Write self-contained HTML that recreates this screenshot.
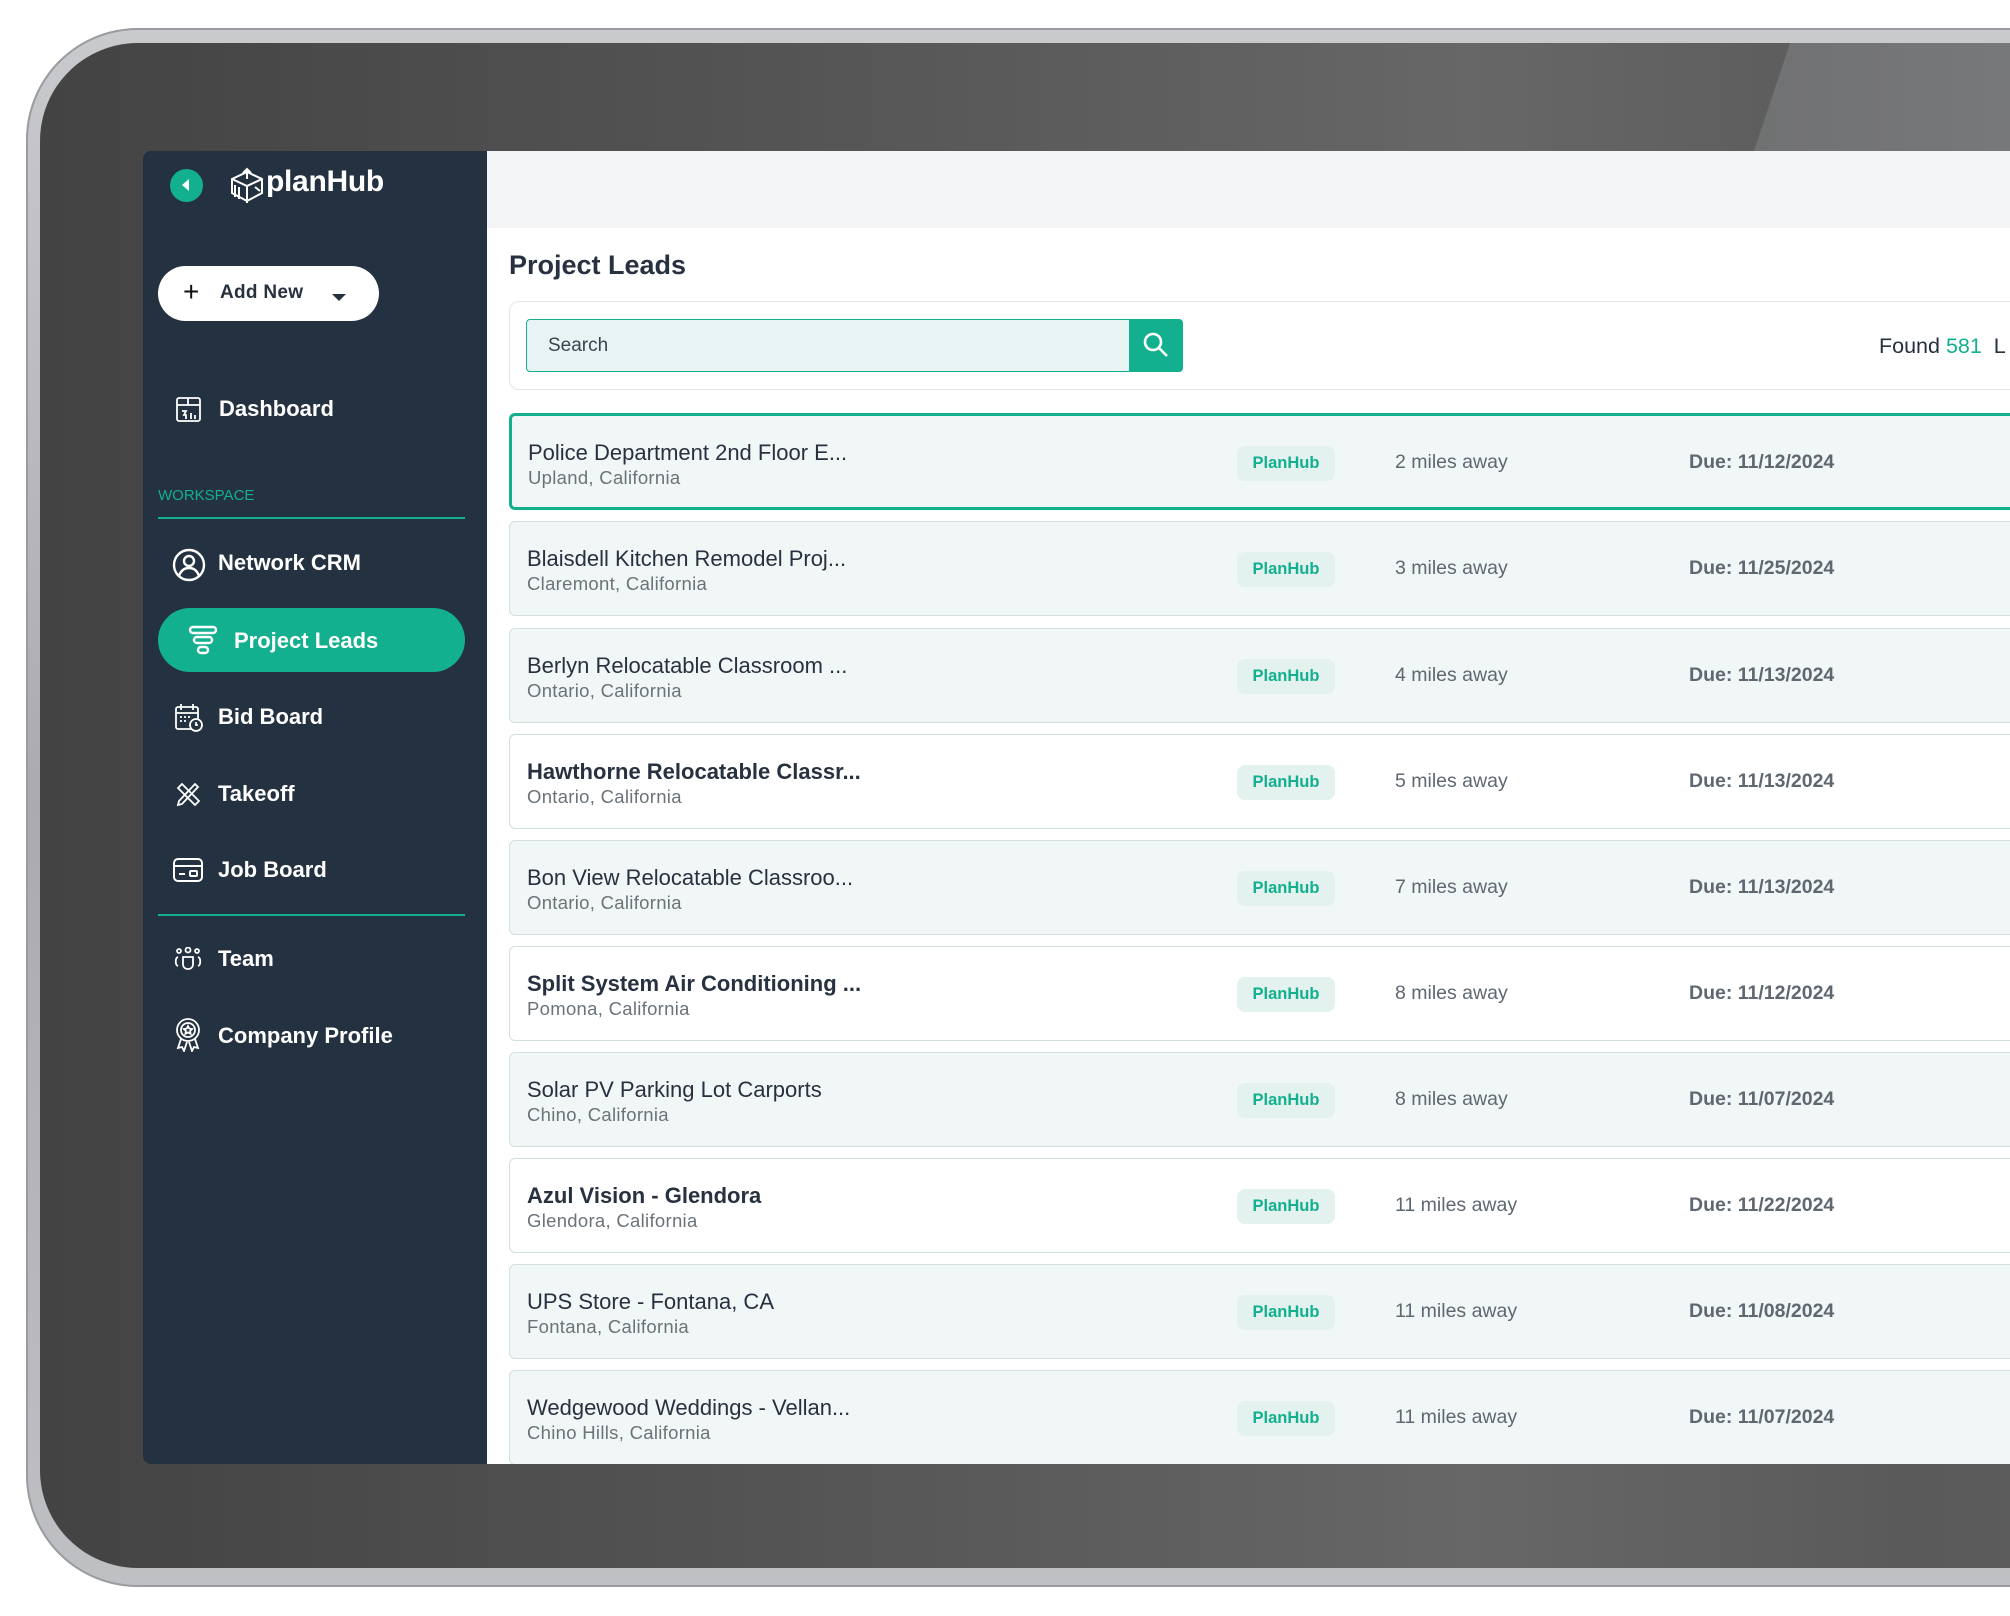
<!DOCTYPE html>
<html><head><meta charset="utf-8"><style>
*{margin:0;padding:0;box-sizing:border-box}
body{width:2010px;height:1616px;background:#fff;position:relative;overflow:hidden;font-family:"Liberation Sans",sans-serif}
.rim{position:absolute;left:26px;top:28px;width:2200px;height:1559px;border-radius:112px;background:linear-gradient(180deg,#c9cacd,#a9abaf 50%,#bfc0c3);box-shadow:inset 0 0 0 2px #9a9ca0}
.bezel{position:absolute;left:40px;top:43px;width:2200px;height:1525px;border-radius:98px;background:linear-gradient(90deg,#434343 0%,#555 35%,#676767 65%,#5a5a5a 85%,#5f5f5f 100%);overflow:hidden}
.glare{position:absolute;left:1710px;top:0;width:400px;height:120px;background:linear-gradient(90deg,#707172,#7b7c7e);clip-path:polygon(40px 0,400px 0,400px 120px,0 120px)}
.side{position:absolute;left:143px;top:151px;width:344px;height:1313px;background:#243140;border-radius:8px 0 0 8px;color:#fff}
.main{position:absolute;left:487px;top:151px;width:1523px;height:1313px;background:#fff;overflow:hidden}
.topbar{position:absolute;left:0;top:0;width:100%;height:77px;background:#f4f5f7}
.nav{position:absolute;left:0;display:flex;align-items:center;font-size:22px;font-weight:bold;color:#fff}
.nav svg{position:absolute}
.row{position:absolute;left:22px;width:1600px;height:95px;border:1.5px solid #d3dfe0;border-radius:6px;background:#f1f6f6}
.row.w{background:#fff}
.row .t{position:absolute;left:17px;top:24px;font-size:22px;color:#27313f}
.row.w .t{font-weight:bold}
.row .s{position:absolute;left:17px;top:51px;font-size:18.5px;color:#6b7379;letter-spacing:.3px}
.row .b{position:absolute;left:727px;top:30px;width:98px;height:35px;border-radius:8px;background:#e3f1ef;color:#12b08e;font-size:16.5px;font-weight:bold;text-align:center;line-height:35px}
.row .m{position:absolute;left:885px;top:35px;font-size:19.5px;color:#5f6870}
.row .d{position:absolute;left:1179px;top:35px;font-size:19.5px;color:#5f6870;font-weight:bold}
</style></head><body>
<div class="rim"></div>
<div class="bezel"><div class="glare"></div></div>

<div class="side">
  <div style="position:absolute;left:27px;top:18px;width:33px;height:33px;border-radius:50%;background:#12b08e"></div>
  <div style="position:absolute;left:39px;top:28px;width:0;height:0;border-top:6px solid transparent;border-bottom:6px solid transparent;border-right:7px solid #fff"></div>
  <svg style="position:absolute;left:86px;top:16px" width="36" height="38" viewBox="0 0 36 38" fill="none" stroke="#fff" stroke-width="2">
    <path d="M18 2v10M14 6l4-4 4 4M3 12l15-7 15 7v14l-15 8-15-8z M3 12l15 7 15-7 M18 19v17 M6 18v12 M10 20v12 M26 20l5 4"/>
  </svg>
  <div style="position:absolute;left:123px;top:14px;font-size:30px;font-weight:bold;color:#fff;letter-spacing:-.3px">planHub</div>

  <div style="position:absolute;left:15px;top:115px;width:221px;height:55px;border-radius:28px;background:#fff"></div>
  <div style="position:absolute;left:40px;top:125px;font-size:28px;color:#111">+</div>
  <div style="position:absolute;left:77px;top:131px;font-size:19px;font-weight:bold;color:#27313f;letter-spacing:.3px">Add New</div>
  <div style="position:absolute;left:189px;top:143px;border-left:7px solid transparent;border-right:7px solid transparent;border-top:7px solid #27313f"></div>

  <svg style="position:absolute;left:33px;top:246px" width="25" height="25" viewBox="0 0 25 25" fill="none" stroke="#fff" stroke-width="1.8"><rect x="1" y="1" width="23" height="23" rx="2"/><path d="M1 8h23M12 1v7M6 14h4l-2 4h2v4M15 22v-6M19 22v-4"/></svg>
  <div class="nav" style="left:76px;top:245px">Dashboard</div>

  <div style="position:absolute;left:15px;top:336px;font-size:15px;color:#12b08e">WORKSPACE</div>
  <div style="position:absolute;left:15px;top:366px;width:307px;height:2px;background:#12b08e"></div>

  <svg style="position:absolute;left:29px;top:397px" width="34" height="34" viewBox="0 0 34 34" fill="none" stroke="#fff" stroke-width="2.4"><circle cx="17" cy="17" r="15"/><circle cx="17" cy="13" r="5"/><path d="M7 28c2-6 6-8 10-8s8 2 10 8"/></svg>
  <div class="nav" style="left:75px;top:399px">Network CRM</div>

  <div style="position:absolute;left:15px;top:457px;width:307px;height:64px;border-radius:32px;background:#12b08e"></div>
  <svg style="position:absolute;left:45px;top:474px" width="30" height="30" viewBox="0 0 30 30" fill="none" stroke="#fff" stroke-width="2.4"><rect x="2" y="2" width="26" height="6" rx="3"/><rect x="6" y="12" width="18" height="6" rx="3"/><rect x="10" y="22" width="10" height="6" rx="3"/></svg>
  <div class="nav" style="left:91px;top:477px">Project Leads</div>

  <svg style="position:absolute;left:31px;top:552px" width="30" height="30" viewBox="0 0 30 30" fill="none" stroke="#fff" stroke-width="1.8"><rect x="2" y="4" width="22" height="22" rx="2"/><path d="M2 10h22M7 1v6M19 1v6M6 14h2M10 14h2M14 14h2M6 18h2M10 18h2"/><circle cx="22" cy="22" r="6" fill="#243140"/><path d="M22 19v3h2"/></svg>
  <div class="nav" style="left:75px;top:553px">Bid Board</div>

  <svg style="position:absolute;left:32px;top:630px" width="26" height="26" viewBox="0 0 26 26" fill="none" stroke="#fff" stroke-width="1.8"><path d="M3 7l4-4 17 17-4 4z M20 3l3 3-16 17-4 1 1-4z"/></svg>
  <div class="nav" style="left:75px;top:630px">Takeoff</div>

  <svg style="position:absolute;left:30px;top:706px" width="30" height="26" viewBox="0 0 30 26" fill="none" stroke="#fff" stroke-width="2"><rect x="1" y="2" width="28" height="22" rx="4"/><path d="M1 9h28M6 17h6"/><rect x="17" y="14" width="7" height="5" rx="1"/></svg>
  <div class="nav" style="left:75px;top:706px">Job Board</div>

  <div style="position:absolute;left:15px;top:763px;width:307px;height:1.5px;background:#12b08e"></div>

  <svg style="position:absolute;left:31px;top:796px" width="28" height="24" viewBox="0 0 28 24" fill="none" stroke="#fff" stroke-width="1.8"><circle cx="5" cy="4" r="2"/><circle cx="14" cy="3" r="2.5"/><circle cx="23" cy="4" r="2"/><path d="M4 10c-3 1-3 8 0 9M24 10c3 1 3 8 0 9M9 10h10v7c0 3-2 5-5 5s-5-2-5-5z"/></svg>
  <div class="nav" style="left:75px;top:795px">Team</div>

  <svg style="position:absolute;left:32px;top:867px" width="26" height="34" viewBox="0 0 26 34" fill="none" stroke="#fff" stroke-width="1.8"><circle cx="13" cy="12" r="11"/><circle cx="13" cy="12" r="7"/><path d="M13 8l1.3 2.6 2.8.4-2 2 .5 2.8-2.6-1.4-2.6 1.4.5-2.8-2-2 2.8-.4z M6 21l-3 9 4-1 2 4 3-9 M20 21l3 9-4-1-2 4-3-9"/></svg>
  <div class="nav" style="left:75px;top:872px">Company Profile</div>
</div>

<div class="main">
  <div class="topbar"></div>
  <div style="position:absolute;left:22px;top:99px;font-size:27px;font-weight:bold;color:#27313f">Project Leads</div>
  <div style="position:absolute;left:22px;top:150px;width:1600px;height:89px;border:1.5px solid #e1e4e8;border-radius:10px;background:#fff"></div>
  <div style="position:absolute;left:39px;top:168px;width:605px;height:53px;border:1.5px solid #12b08e;border-radius:4px 0 0 4px;background:#e7f4f3"></div>
  <div style="position:absolute;left:61px;top:184px;font-size:19px;color:#3a4450">Search</div>
  <div style="position:absolute;left:642px;top:168px;width:54px;height:53px;background:#12b08e;border-radius:0 4px 4px 0"></div>
  <svg style="position:absolute;left:655px;top:180px" width="28" height="28" viewBox="0 0 28 28" fill="none" stroke="#fff" stroke-width="2.6"><circle cx="11" cy="11" r="8"/><path d="M17 17l8 8"/></svg>
  <div style="position:absolute;left:1392px;top:183px;font-size:21.5px;color:#27313f;white-space:nowrap">Found <span style="color:#12b08e">581</span> &nbsp;L</div>

  <div class="row" style="top:262px;height:97px;border:3px solid #12b08e"><div class="t" style="left:16px">Police Department 2nd Floor E...</div><div class="s" style="left:16px">Upland, California</div><div class="b" style="left:725px">PlanHub</div><div class="m" style="left:883px">2 miles away</div><div class="d" style="left:1177px">Due: 11/12/2024</div></div>
  <div class="row" style="top:370px"><div class="t">Blaisdell Kitchen Remodel Proj...</div><div class="s">Claremont, California</div><div class="b">PlanHub</div><div class="m">3 miles away</div><div class="d">Due: 11/25/2024</div></div>
  <div class="row" style="top:477px"><div class="t">Berlyn Relocatable Classroom ...</div><div class="s">Ontario, California</div><div class="b">PlanHub</div><div class="m">4 miles away</div><div class="d">Due: 11/13/2024</div></div>
  <div class="row w" style="top:583px"><div class="t">Hawthorne Relocatable Classr...</div><div class="s">Ontario, California</div><div class="b">PlanHub</div><div class="m">5 miles away</div><div class="d">Due: 11/13/2024</div></div>
  <div class="row" style="top:689px"><div class="t">Bon View Relocatable Classroo...</div><div class="s">Ontario, California</div><div class="b">PlanHub</div><div class="m">7 miles away</div><div class="d">Due: 11/13/2024</div></div>
  <div class="row w" style="top:795px"><div class="t">Split System Air Conditioning ...</div><div class="s">Pomona, California</div><div class="b">PlanHub</div><div class="m">8 miles away</div><div class="d">Due: 11/12/2024</div></div>
  <div class="row" style="top:901px"><div class="t">Solar PV Parking Lot Carports</div><div class="s">Chino, California</div><div class="b">PlanHub</div><div class="m">8 miles away</div><div class="d">Due: 11/07/2024</div></div>
  <div class="row w" style="top:1007px"><div class="t">Azul Vision - Glendora</div><div class="s">Glendora, California</div><div class="b">PlanHub</div><div class="m">11 miles away</div><div class="d">Due: 11/22/2024</div></div>
  <div class="row" style="top:1113px"><div class="t">UPS Store - Fontana, CA</div><div class="s">Fontana, California</div><div class="b">PlanHub</div><div class="m">11 miles away</div><div class="d">Due: 11/08/2024</div></div>
  <div class="row" style="top:1219px"><div class="t">Wedgewood Weddings - Vellan...</div><div class="s">Chino Hills, California</div><div class="b">PlanHub</div><div class="m">11 miles away</div><div class="d">Due: 11/07/2024</div></div>
</div>
</body></html>
